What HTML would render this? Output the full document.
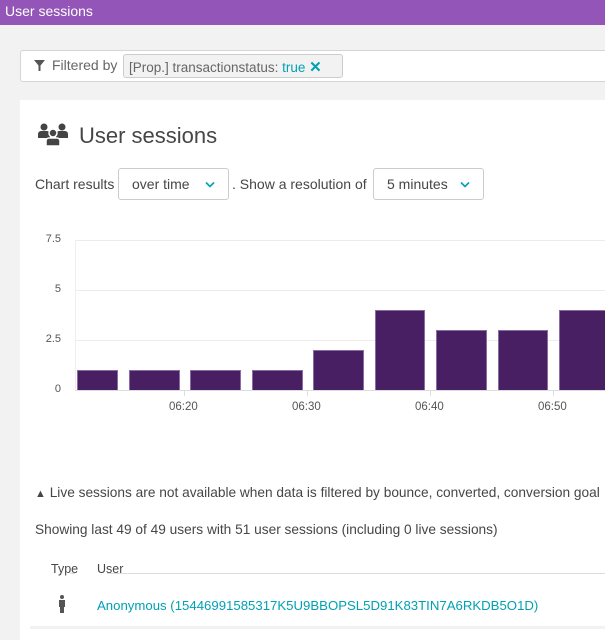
<!DOCTYPE html>
<html><head><meta charset="utf-8"><style>
*{margin:0;padding:0;box-sizing:border-box}
body{width:605px;height:629px;overflow:hidden;background:#f2f2f2;font-family:"Liberation Sans",sans-serif;color:#454646;position:relative;font-size:14px}
.a{position:absolute;white-space:nowrap}
.bar{position:absolute;background:#481f62;border:1px solid #8a6ca0;border-bottom:none}
.g{position:absolute;left:75px;width:530px;height:1px;background:#ececec}
.yl{position:absolute;font-size:11px;color:#555;width:28px;text-align:right;left:33px}
.xl{position:absolute;font-size:11.5px;color:#555;top:401px}
.sel{position:absolute;border:1px solid #ccc;border-radius:3px;background:#fff;height:32px;top:168px;padding:7px 0 0 13px;font-size:14px}
.sel svg{position:absolute;left:86px;top:12px}
</style></head><body>
<div class="a" style="left:0;top:0;width:605px;height:25px;background:#9355b7;color:#fff;font-size:14px;padding:3px 0 0 5px">User sessions</div>
<div class="a" style="left:20px;top:50px;width:600px;height:32px;background:#fff;border:1px solid #d5d5d5;border-radius:3px"></div>
<svg class="a" style="left:33px;top:59px" width="13" height="13" viewBox="0 0 13 13"><path d="M1 1h11L7.5 6.5V12h-2V6.5z" fill="#555"/></svg>
<div class="a" style="left:52px;top:57px;color:#666">Filtered by</div>
<div class="a" style="left:123px;top:54px;width:220px;height:24px;background:#f2f2f2;border:1px solid #ccc;border-radius:3px;padding:3px 0 0 5px;color:#666;font-size:13.5px">[Prop.] transactionstatus: <span style="color:#00a1b2">true</span> <span style="color:#00a1b2;font-weight:bold;font-size:15px">✕</span></div>
<div class="a" style="left:20px;top:100px;width:600px;height:540px;background:#fff"></div>
<svg class="a" style="left:37px;top:122px" width="32" height="24" viewBox="0 0 32 24"><g fill="#444"><circle cx="7" cy="5" r="3.5"/><circle cx="25" cy="5" r="3.5"/><path d="M1 16v-4a3 3 0 0 1 3-3h6a3 3 0 0 1 3 3v4zM19 16v-4a3 3 0 0 1 3-3h6a3 3 0 0 1 3 3v4z"/><circle cx="16" cy="11" r="4" stroke="#fff" stroke-width="1.5"/><path d="M9 24v-5a3 3 0 0 1 3-3h8a3 3 0 0 1 3 3v5z" stroke="#fff" stroke-width="1.5"/></g></svg>
<div class="a" style="left:79px;top:123px;font-size:22px;color:#454646">User sessions</div>
<div class="a" style="left:35px;top:176px">Chart results</div>
<div class="sel" style="left:118px;width:111px">over time <svg width="10" height="7" viewBox="0 0 10 7"><path d="M1 1.5l4 4 4-4" fill="none" stroke="#00a1b2" stroke-width="1.6"/></svg></div>
<div class="a" style="left:232px;top:176px">. Show a resolution of</div>
<div class="sel" style="left:373px;width:111px">5 minutes <svg width="10" height="7" viewBox="0 0 10 7"><path d="M1 1.5l4 4 4-4" fill="none" stroke="#00a1b2" stroke-width="1.6"/></svg></div>
<div class="g" style="top:240px"></div><div class="g" style="top:290px"></div><div class="g" style="top:340px"></div><div class="g" style="top:390px;background:#ddd"></div>
<div class="a" style="left:75px;top:240px;width:1px;height:150px;background:#eee"></div>
<div class="yl" style="top:233px">7.5</div><div class="yl" style="top:283px">5</div><div class="yl" style="top:333px">2.5</div><div class="yl" style="top:383px">0</div>
<div class="bar" style="left:77px;top:370px;width:41px;height:20px"></div>
<div class="bar" style="left:129px;top:370px;width:51px;height:20px"></div>
<div class="bar" style="left:190px;top:370px;width:51px;height:20px"></div>
<div class="bar" style="left:252px;top:370px;width:51px;height:20px"></div>
<div class="bar" style="left:313px;top:350px;width:51px;height:40px"></div>
<div class="bar" style="left:375px;top:310px;width:50px;height:80px"></div>
<div class="bar" style="left:436px;top:330px;width:51px;height:60px"></div>
<div class="bar" style="left:498px;top:330px;width:50px;height:60px"></div>
<div class="bar" style="left:559px;top:310px;width:50px;height:80px"></div>
<div class="a" style="left:184px;top:390px;width:1px;height:6px;background:#ddd"></div>
<div class="a" style="left:307px;top:390px;width:1px;height:6px;background:#ddd"></div>
<div class="a" style="left:430px;top:390px;width:1px;height:6px;background:#ddd"></div>
<div class="a" style="left:553px;top:390px;width:1px;height:6px;background:#ddd"></div>
<div class="xl" style="left:169px">06:20</div><div class="xl" style="left:292px">06:30</div><div class="xl" style="left:415px">06:40</div><div class="xl" style="left:538px">06:50</div>
<div class="a" style="left:35px;top:485px;font-size:13.7px"><span style="font-size:11px">&#9650;</span> Live sessions are not available when data is filtered by bounce, converted, conversion goal</div>
<div class="a" style="left:35px;top:522px;font-size:13.7px">Showing last 49 of 49 users with 51 user sessions (including 0 live sessions)</div>
<div class="a" style="left:51px;top:562px;font-size:12.5px">Type</div>
<div class="a" style="left:97px;top:562px;font-size:12.5px">User</div>
<div class="a" style="left:70px;top:573px;width:5px;height:1px;background:#ddd"></div>
<div class="a" style="left:107px;top:573px;width:498px;height:1px;background:#ddd"></div>
<svg class="a" style="left:58px;top:595px" width="8" height="18" viewBox="0 0 8 18"><circle cx="4" cy="2" r="2" fill="#555"/><path d="M1 5h6v7H6v6H2v-6H1z" fill="#555"/></svg>
<div class="a" style="left:97px;top:598px;color:#00a1b2;font-size:13.2px">Anonymous (15446991585317K5U9BBOPSL5D91K83TIN7A6RKDB5O1D)</div>
<div class="a" style="left:30px;top:626px;width:575px;height:3px;background:#f2f2f2"></div>
</body></html>
